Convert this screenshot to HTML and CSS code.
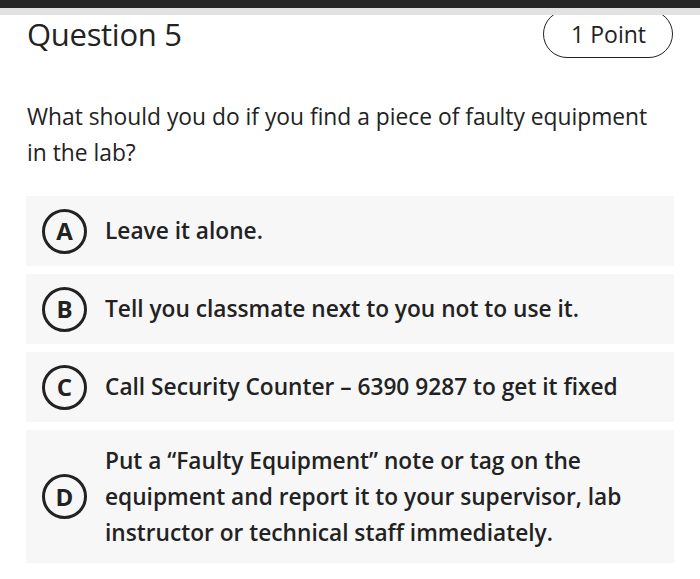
FILE: index.html
```html
<!DOCTYPE html>
<html>
<head>
<meta charset="utf-8">
<link rel="stylesheet" href="styles.css">
</head>
<body>
<div class="chrome">
  <div class="chrome-dark"></div>
  <div class="chrome-light"></div>
</div>
<main class="page">
  <header class="title-row">
    <h1 class="title">Question 5</h1>
    <span class="points">1 Point</span>
  </header>
  <p class="question">What should you do if you find a piece of faulty equipment in the lab?</p>
  <ul class="options">
    <li class="option"><span class="letter">A</span><span class="text">Leave it alone.</span></li>
    <li class="option"><span class="letter">B</span><span class="text">Tell you classmate next to you not to use it.</span></li>
    <li class="option"><span class="letter">C</span><span class="text">Call Security Counter – 6390 9287 to get it fixed</span></li>
    <li class="option"><span class="letter">D</span><span class="text">Put a “Faulty Equipment” note or tag on the equipment and report it to your supervisor, lab instructor or technical staff immediately.</span></li>
  </ul>
</main>
</body>
</html>
```
FILE: styles.css
```css
html, body {
  margin: 0;
  padding: 0;
  background: #ffffff;
}
body {
  font-family: "Open Sans", "Noto Sans", sans-serif;
  color: #222222;
  width: 700px;
  height: 579px;
  overflow: hidden;
  position: relative;
}
.chrome {
  position: absolute;
  top: 0;
  left: 0;
  right: 0;
  z-index: 2;
}
.chrome-dark {
  height: 8px;
  background: #262626;
}
.chrome-light {
  height: 7px;
  background: #e2e2e2;
}
.page {
  padding: 10px 26px 0 27px;
}
.title-row {
  display: flex;
  justify-content: space-between;
  align-items: center;
}
.title {
  margin: 0;
  font-size: 31px;
  font-weight: 500;
  line-height: 48px;
  letter-spacing: -0.3px;
}
.points {
  box-sizing: border-box;
  height: 48px;
  padding: 0 26px 0 27px;
  border: 1.5px solid #222;
  border-radius: 24px;
  font-size: 23px;
  font-weight: 500;
  line-height: 46px;
  margin-left: auto;
  margin-right: 1px;
}
.question {
  margin: 41px 0 0 0;
  max-width: 630px;
  font-size: 22.8px;
  line-height: 36px;
  font-weight: 400;
}
.options {
  list-style: none;
  margin: 25px 0 0 -1px;
  padding: 0;
  display: flex;
  flex-direction: column;
  gap: 8px;
}
.option {
  display: flex;
  align-items: center;
  gap: 18px;
  padding: 12.5px 16px;
  background: #f7f7f7;
  font-size: 22.7px;
  font-weight: 600;
  line-height: 36px;
}
.letter {
  flex: none;
  box-sizing: border-box;
  width: 45px;
  height: 45px;
  border: 3px solid #222;
  border-radius: 50%;
  display: flex;
  align-items: center;
  justify-content: center;
  font-size: 24px;
  font-weight: 700;
  line-height: 1;
}
.text {
  flex: 1;
}
```
